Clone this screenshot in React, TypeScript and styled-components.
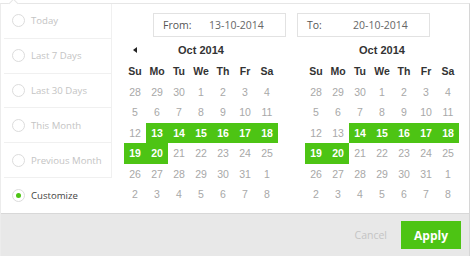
import styled, { createGlobalStyle } from "styled-components";

const GREEN = "#4dc414";

const GlobalStyle = createGlobalStyle`
  html, body {
    margin: 0;
    padding: 0;
    background: #ffffff;
  }
  body {
    font-family: "Liberation Sans", Arial, sans-serif;
  }
`;

const Page = styled.div`
  position: relative;
  width: 470px;
  height: 256px;
  padding-top: 3px;
  box-sizing: border-box;
  display: flex;
  flex-direction: column;
`;

const Panel = styled.div`
  flex: 1;
  display: flex;
  flex-direction: column;
  border-top: 1px solid #e6e6e6;
  border-right: 1px solid #d6d6d6;
  border-left: 1px solid #ececec;
  background: #fff;
`;

const Notch = styled.div`
  position: absolute;
  left: 10px;
  top: 0;
  width: 6px;
  height: 6px;
  background: #fff;
  border-left: 1px solid #e6e6e6;
  border-top: 1px solid #e6e6e6;
  transform: rotate(45deg);
`;

const Body = styled.div`
  display: flex;
  height: 209px;
`;

const Sidebar = styled.ul`
  list-style: none;
  margin: 0;
  padding: 0 0 0 3px;
  width: 108px;
  display: flex;
  flex-direction: column;
`;

const Option = styled.li<{ $last?: boolean }>`
  height: 35px;
  box-sizing: border-box;
  display: flex;
  align-items: center;
  gap: 6px;
  padding-left: 8px;
  border-bottom: ${(p) => (p.$last ? "none" : "1px solid #f0f0f0")};
  border-right: ${(p) => (p.$last ? "none" : "1px solid #f0f0f0")};
  font-family: "Open Sans", "Noto Sans", sans-serif;
  font-size: 9.6px;
  color: ${(p) => (p.$last ? "#444" : "#c4c4c4")};
`;

const Radio = styled.span<{ $on?: boolean }>`
  width: 11px;
  height: 11px;
  border-radius: 50%;
  border: 1px solid #dcdcdc;
  display: flex;
  align-items: center;
  justify-content: center;
  flex-shrink: 0;
  &::after {
    content: "";
    display: ${(p) => (p.$on ? "block" : "none")};
    width: 5px;
    height: 5px;
    border-radius: 50%;
    background: ${GREEN};
  }
`;

const Main = styled.div`
  flex: 1;
  display: flex;
  flex-direction: column;
`;

const InputRow = styled.div`
  display: flex;
  gap: 11px;
  padding: 9px 0 0 41px;
`;

const DateInput = styled.div`
  width: 133px;
  height: 24px;
  box-sizing: border-box;
  border: 1px solid #e2e2e2;
  display: flex;
  align-items: center;
  padding-left: 9px;
  font-family: "Open Sans", "Noto Sans", sans-serif;
  font-size: 10.5px;
  color: #555;
`;

const InputLabel = styled.span`
  width: 46px;
`;

const InputValue = styled.span`
  color: #666;
`;

const Calendars = styled.div`
  display: flex;
  gap: 27px;
  padding: 2px 0 0 12px;
`;

const Calendar = styled.div`
  width: 154px;
  display: flex;
  flex-direction: column;
`;

const Header = styled.div`
  position: relative;
  height: 22px;
  display: flex;
  align-items: center;
  justify-content: center;
  font-size: 11px;
  font-weight: bold;
  color: #333;
`;

const Prev = styled.span`
  position: absolute;
  left: 9px;
  top: 8px;
  width: 0;
  height: 0;
  border-top: 3px solid transparent;
  border-bottom: 3px solid transparent;
  border-right: 4px solid #222;
`;

const Grid = styled.div`
  display: grid;
  grid-template-columns: repeat(7, 22px);
  grid-auto-rows: 20.5px;
`;

const DayName = styled.div`
  display: flex;
  align-items: center;
  justify-content: center;
  font-size: 10.5px;
  font-weight: bold;
  color: #333;
`;

const Day = styled.div<{ $on?: boolean }>`
  display: flex;
  align-items: center;
  justify-content: center;
  font-size: 10.5px;
  font-weight: ${(p) => (p.$on ? "bold" : "normal")};
  color: ${(p) => (p.$on ? "#fff" : "#a8a8a8")};
  background: ${(p) => (p.$on ? GREEN : "transparent")};
`;

const Footer = styled.div`
  flex: 1;
  background: #e8e8e8;
  border-top: 1px solid #d8d8d8;
  display: flex;
  align-items: center;
  justify-content: flex-end;
  gap: 14px;
  padding-right: 8px;
`;

const Cancel = styled.span`
  font-family: "Open Sans", "Noto Sans", sans-serif;
  font-size: 10.5px;
  color: #c4c4c4;
`;

const Apply = styled.button`
  width: 60px;
  height: 28px;
  border: none;
  background: ${GREEN};
  color: #fff;
  font-family: "Open Sans", "Noto Sans", sans-serif;
  font-weight: bold;
  font-size: 12px;
  padding: 0;
`;

const options = ["Today", "Last 7 Days", "Last 30 Days", "This Month", "Previous Month", "Customize"];
const dayNames = ["Su", "Mo", "Tu", "We", "Th", "Fr", "Sa"];
const days = [
  28, 29, 30, 1, 2, 3, 4, 5, 6, 7, 8, 9, 10, 11, 12, 13, 14, 15, 16, 17, 18, 19, 20, 21, 22, 23, 24, 25,
  26, 27, 28, 29, 30, 31, 1, 2, 3, 4, 5, 6, 7, 8,
];

const Month = ({ from, arrow }: { from: number; arrow?: boolean }) => (
  <Calendar>
    <Header>
      {arrow && <Prev />}
      Oct 2014
    </Header>
    <Grid>
      {dayNames.map((d) => (
        <DayName key={d}>{d}</DayName>
      ))}
      {days.map((d, i) => (
        <Day key={i} $on={i >= from && i <= 22}>
          {d}
        </Day>
      ))}
    </Grid>
  </Calendar>
);

export default function App() {
  return (
    <>
      <GlobalStyle />
      <Page>
        <Notch />
        <Panel>
          <Body>
            <Sidebar>
              {options.map((o, i) => (
                <Option key={o} $last={i === options.length - 1}>
                  <Radio $on={i === options.length - 1} />
                  {o}
                </Option>
              ))}
            </Sidebar>
            <Main>
              <InputRow>
                <DateInput>
                  <InputLabel>From:</InputLabel>
                  <InputValue>13-10-2014</InputValue>
                </DateInput>
                <DateInput>
                  <InputLabel>To:</InputLabel>
                  <InputValue>20-10-2014</InputValue>
                </DateInput>
              </InputRow>
              <Calendars>
                <Month from={15} arrow />
                <Month from={16} />
              </Calendars>
            </Main>
          </Body>
          <Footer>
            <Cancel>Cancel</Cancel>
            <Apply>Apply</Apply>
          </Footer>
        </Panel>
      </Page>
    </>
  );
}
